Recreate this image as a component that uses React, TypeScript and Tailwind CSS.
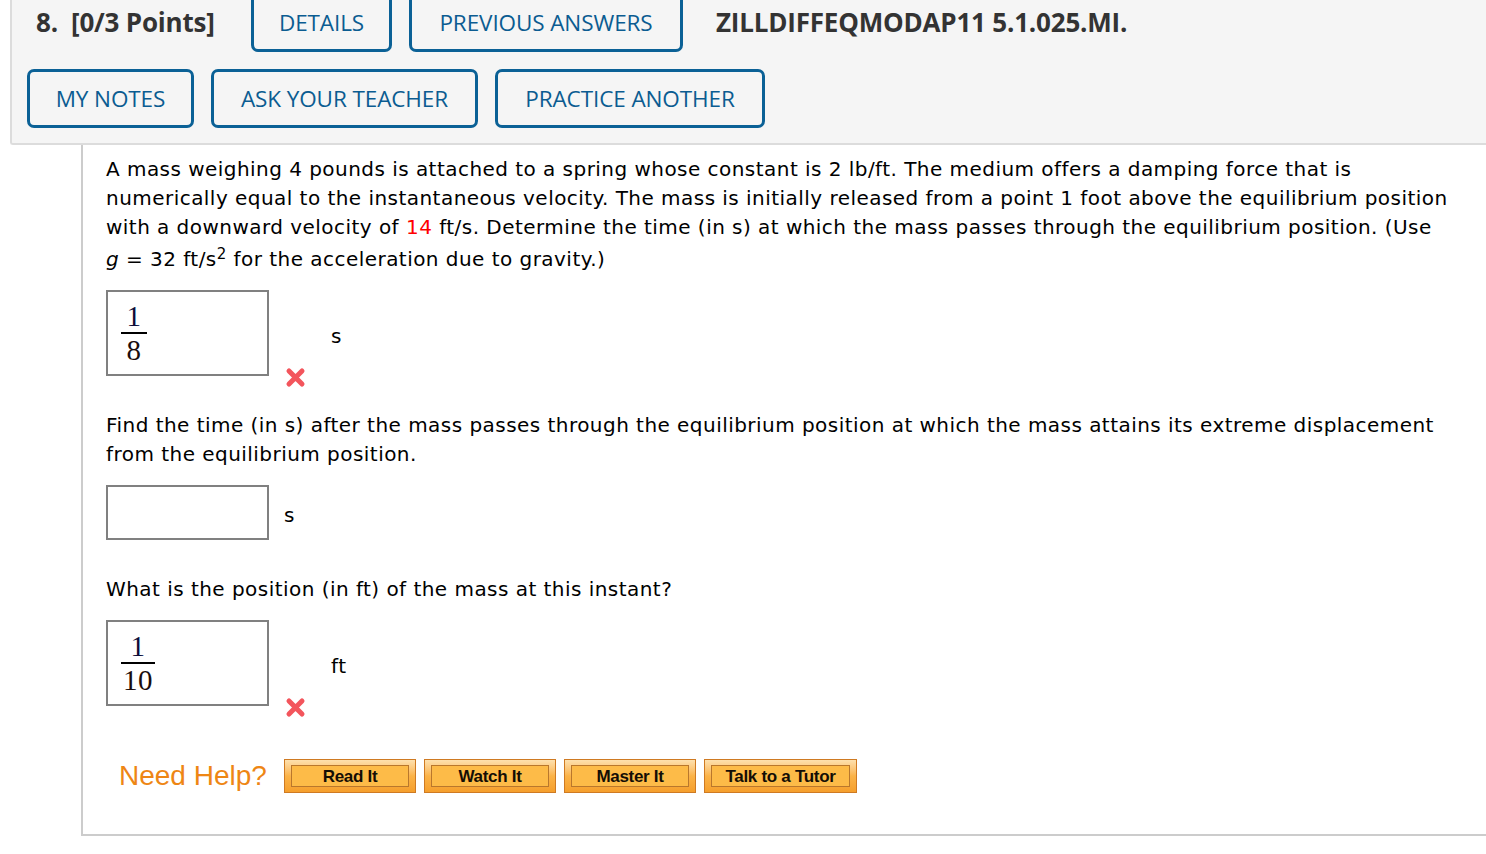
import React from 'react';

const BLUE_BTN =
  'h-[59px] flex items-center justify-center rounded-[7px] border-[3px] border-[#0b6196] text-[22.5px] text-[#0b5c91] tracking-[-0.1px]';

function HeaderButton({ label, width }: { label: string; width: string }) {
  return <div className={`${BLUE_BTN} ${width} shrink-0`}>{label}</div>;
}

function WrongMark() {
  return (
    <svg width="21" height="21" viewBox="0 0 21 21" className="shrink-0">
      <path d="M4 4 L17 17 M17 4 L4 17" stroke="#f3474f" strokeWidth="5" strokeLinecap="round" opacity="0.92" />
    </svg>
  );
}

function Fraction({ num, den, bar }: { num: string; den: string; bar: string }) {
  return (
    <div className="inline-flex flex-col items-center font-['Liberation_Serif',serif] text-[29px] leading-[32px] text-black">
      <span className="text-[#0d0d3a]">{num}</span>
      <span className={`h-[2px] bg-black ${bar}`} />
      <span className="text-[#1a0d0d]">{den}</span>
    </div>
  );
}

function HelpButton({ label, width }: { label: string; width: string }) {
  return (
    <div className={`${width} h-[34px] shrink-0 border border-[#cf7a22] bg-gradient-to-b from-[#fde0ad] via-[#fbb347] to-[#f59f2c] p-[5px_6px]`}>
      <div className="h-full w-full border border-[#b9772c] bg-[#fdbb48] flex items-center justify-center font-['Liberation_Sans',Arial,sans-serif] font-bold text-[17px] text-[#140e05] tracking-[-0.3px] leading-none">
        {label}
      </div>
    </div>
  );
}

export default function App() {
  return (
    <div className="w-[1486px] h-[854px] overflow-hidden bg-white font-['DejaVu_Sans',Verdana,sans-serif] text-black">
      {/* Question header */}
      <div className="ml-[10px] -mt-[10px] bg-[#f5f5f5] border-l-2 border-b-2 border-[#dcdcdc] rounded-bl-[3px] pt-[3px] pb-[15px] font-['Open_Sans',sans-serif]">
        <div className="flex items-center pl-[24px]">
          <div className="w-[215px] shrink-0 text-[26px] font-bold text-[#333333] tracking-[-0.2px] whitespace-nowrap">
            8.&nbsp; [0/3 Points]
          </div>
          <HeaderButton label="DETAILS" width="w-[141px]" />
          <div className="w-[17px] shrink-0" />
          <HeaderButton label="PREVIOUS ANSWERS" width="w-[274px]" />
          <div className="pl-[33px] text-[26px] font-bold text-[#333333] tracking-[-0.2px] whitespace-nowrap">
            ZILLDIFFEQMODAP11 5.1.025.MI.
          </div>
        </div>
        <div className="flex items-center gap-[17px] pl-[15px] mt-[17px]">
          <HeaderButton label="MY NOTES" width="w-[167px]" />
          <HeaderButton label="ASK YOUR TEACHER" width="w-[267px]" />
          <HeaderButton label="PRACTICE ANOTHER" width="w-[270px]" />
        </div>
      </div>

      {/* Question body */}
      <div className="ml-[81px] h-[691px] border-l-2 border-b-2 border-[#cccccc] pl-[23px] pt-[10px] text-[20px] leading-[29px] tracking-[0.46px] whitespace-nowrap">
        <div>
          <div>A mass weighing 4 pounds is attached to a spring whose constant is 2 lb/ft. The medium offers a damping force that is</div>
          <div>numerically equal to the instantaneous velocity. The mass is initially released from a point 1 foot above the equilibrium position</div>
          <div>
            with a downward velocity of <span className="text-[#ff0000]">14</span> ft/s. Determine the time (in s) at which the mass passes through the equilibrium position. (Use
          </div>
          <div className="pt-[3px]">
            <i>g</i> = 32 ft/s<sup className="text-[15px]">2</sup> for the acceleration due to gravity.)
          </div>
        </div>

        <div className="flex mt-[16px]">
          <div className="w-[163px] h-[86px] border-2 border-[#808080] flex items-center pl-[13px]">
            <Fraction num="1" den="8" bar="w-[26px]" />
          </div>
          <div className="self-end -mb-[12px] ml-[16px]">
            <WrongMark />
          </div>
          <div className="self-center ml-[25px] pt-[6px]">s</div>
        </div>

        <div className="mt-[35px]">
          <div>Find the time (in s) after the mass passes through the equilibrium position at which the mass attains its extreme displacement</div>
          <div>from the equilibrium position.</div>
        </div>

        <div className="flex mt-[16px]">
          <div className="w-[163px] h-[55px] border-2 border-[#808080]" />
          <div className="self-center ml-[15px] pt-[5px]">s</div>
        </div>

        <div className="mt-[35px]">What is the position (in ft) of the mass at this instant?</div>

        <div className="flex mt-[16px]">
          <div className="w-[163px] h-[86px] border-2 border-[#808080] flex items-center pl-[13px]">
            <Fraction num="1" den="10" bar="w-[34px]" />
          </div>
          <div className="self-end -mb-[12px] ml-[16px]">
            <WrongMark />
          </div>
          <div className="self-center ml-[25px] pt-[6px]">ft</div>
        </div>

        <div className="flex items-center mt-[53px] pl-[13px]">
          <div className="w-[165px] shrink-0 font-['Liberation_Sans',Arial,sans-serif] text-[28px] leading-none tracking-normal text-[#ee8614]">
            Need Help?
          </div>
          <div className="flex gap-[8px]">
            <HelpButton label="Read It" width="w-[132px]" />
            <HelpButton label="Watch It" width="w-[132px]" />
            <HelpButton label="Master It" width="w-[132px]" />
            <HelpButton label="Talk to a Tutor" width="w-[153px]" />
          </div>
        </div>
      </div>
    </div>
  );
}
